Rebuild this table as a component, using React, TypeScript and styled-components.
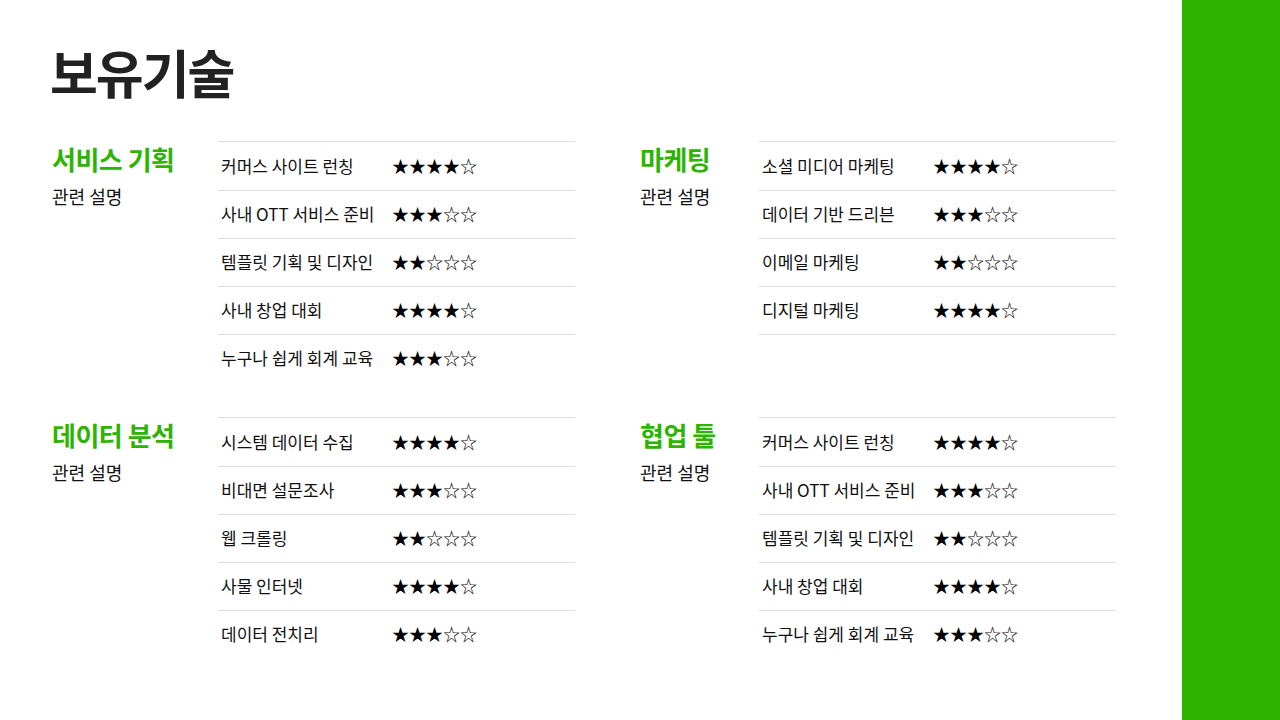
import React from "react";
import styled, { createGlobalStyle } from "styled-components";

const GlobalStyle = createGlobalStyle`
  html, body {
    margin: 0;
    padding: 0;
    background: #fff;
    font-family: "Noto Sans CJK KR", "Noto Sans", sans-serif;
    color: #111;
  }
`;

const Page = styled.div`
  width: 1280px;
  height: 720px;
  display: flex;
  overflow: hidden;
`;

const Main = styled.div`
  flex: 1;
  padding: 36px 0 0 50px;
  box-sizing: border-box;
`;

const SideBar = styled.div`
  width: 98px;
  background: #2db400;
`;

const Title = styled.h1`
  margin: 0;
  font-size: 52px;
  font-weight: 700;
  line-height: 72px;
  color: #222;
  letter-spacing: -2px;
`;

const Grid = styled.div`
  display: grid;
  grid-template-columns: 523px 476px;
  column-gap: 65px;
  row-gap: 35px;
  margin-top: 33px;
  padding-left: 2px;
`;

const Section = styled.div`
  display: flex;
  align-items: flex-start;
`;

const CategoryBox = styled.div<{ $width: number }>`
  width: ${(p) => p.$width}px;
  flex-shrink: 0;
`;

const CategoryName = styled.h2`
  margin: 0;
  font-size: 26px;
  font-weight: 700;
  line-height: 36px;
  color: #2db400;
  letter-spacing: -0.5px;
`;

const CategoryDesc = styled.p`
  margin: 6px 0 0;
  font-size: 18px;
  line-height: 26px;
  color: #111;
`;

const Table = styled.div<{ $closed?: boolean }>`
  width: 357px;
  border-bottom: ${(p) => (p.$closed ? "1px solid #dcdcdc" : "none")};
`;

const Row = styled.div`
  display: grid;
  grid-template-columns: 171px 1fr;
  align-items: center;
  height: 48px;
  padding: 0 0 2px 3px;
  border-top: 1px solid #dcdcdc;
  box-sizing: border-box;
  &:first-child {
    height: 49px;
  }
`;

const Label = styled.span`
  font-size: 17px;
  color: #111;
  white-space: nowrap;
`;

const Stars = styled.span`
  font-size: 17px;
  color: #000;
  white-space: nowrap;
`;

type Skill = { name: string; score: number };
type Group = { title: string; width: number; skills: Skill[] };

const stars = (n: number) => "★".repeat(n) + "☆".repeat(5 - n);

const groups: Group[] = [
  {
    title: "서비스 기획",
    width: 166,
    skills: [
      { name: "커머스 사이트 런칭", score: 4 },
      { name: "사내 OTT 서비스 준비", score: 3 },
      { name: "템플릿 기획 및 디자인", score: 2 },
      { name: "사내 창업 대회", score: 4 },
      { name: "누구나 쉽게 회계 교육", score: 3 },
    ],
  },
  {
    title: "마케팅",
    width: 119,
    skills: [
      { name: "소셜 미디어 마케팅", score: 4 },
      { name: "데이터 기반 드리븐", score: 3 },
      { name: "이메일 마케팅", score: 2 },
      { name: "디지털 마케팅", score: 4 },
    ],
  },
  {
    title: "데이터 분석",
    width: 166,
    skills: [
      { name: "시스템 데이터 수집", score: 4 },
      { name: "비대면 설문조사", score: 3 },
      { name: "웹 크롤링", score: 2 },
      { name: "사물 인터넷", score: 4 },
      { name: "데이터 전치리", score: 3 },
    ],
  },
  {
    title: "협업 툴",
    width: 119,
    skills: [
      { name: "커머스 사이트 런칭", score: 4 },
      { name: "사내 OTT 서비스 준비", score: 3 },
      { name: "템플릿 기획 및 디자인", score: 2 },
      { name: "사내 창업 대회", score: 4 },
      { name: "누구나 쉽게 회계 교육", score: 3 },
    ],
  },
];

const App: React.FC = () => {
  return (
    <>
      <GlobalStyle />
      <Page>
        <Main>
          <Title>보유기술</Title>
          <Grid>
            {groups.map((g) => (
              <Section key={g.title}>
                <CategoryBox $width={g.width}>
                  <CategoryName>{g.title}</CategoryName>
                  <CategoryDesc>관련 설명</CategoryDesc>
                </CategoryBox>
                <Table $closed={g.skills.length < 5}>
                  {g.skills.map((s, i) => (
                    <Row key={i}>
                      <Label>{s.name}</Label>
                      <Stars>{stars(s.score)}</Stars>
                    </Row>
                  ))}
                </Table>
              </Section>
            ))}
          </Grid>
        </Main>
        <SideBar />
      </Page>
    </>
  );
};

export default App;
